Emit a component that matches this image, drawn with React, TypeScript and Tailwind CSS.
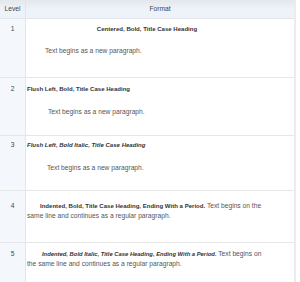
import React from 'react';

type Row = {
  level: string;
  height: string;
  pad: string;
  content: React.ReactNode;
};

// bold headings in the source render narrower than the body copy
const head = 'font-bold text-[6.05px] text-[#333]';

const rows: Row[] = [
  {
    level: '1',
    height: 'h-[59px]',
    pad: 'pt-[5px]',
    content: (
      <>
        <p className={`text-center ${head}`}>Centered, Bold, Title Case Heading</p>
        <p className="mt-[12px] pl-[18px] text-[#555]">Text begins as a new paragraph.</p>
      </>
    ),
  },
  {
    level: '2',
    height: 'h-[58px]',
    pad: 'pt-[6px]',
    content: (
      <>
        <p className={head}>Flush Left, Bold, Title Case Heading</p>
        <p className="mt-[13px] pl-[21px] text-[#555]">Text begins as a new paragraph.</p>
      </>
    ),
  },
  {
    level: '3',
    height: 'h-[55px]',
    pad: 'pt-[4px]',
    content: (
      <>
        <p className={`italic ${head}`}>Flush Left, Bold Italic, Title Case Heading</p>
        <p className="mt-[13px] pl-[20px] text-[#555]">Text begins as a new paragraph.</p>
      </>
    ),
  },
  {
    level: '4',
    height: 'h-[52px]',
    pad: 'pt-[10px]',
    content: (
      <p className="indent-[13px] text-[#555]">
        <span className={head}>Indented, Bold, Title Case Heading, Ending With a Period.</span>{' '}
        Text begins on the same line and continues as a regular paragraph.
      </p>
    ),
  },
  {
    level: '5',
    height: 'h-[52px]',
    pad: 'pt-[6px]',
    content: (
      <p className="indent-[15px] text-[#555]">
        <span className="font-bold text-[5.85px] text-[#333] italic">
          Indented, Bold Italic, Title Case Heading, Ending With a Period.
        </span>{' '}
        Text begins on the same line and continues as a regular paragraph.
      </p>
    ),
  },
];

export default function App() {
  return (
    <div className="h-[282px] w-[300px] overflow-hidden bg-white font-['Liberation_Sans',Arial,sans-serif] text-[6.7px] leading-[10px]">
      <div className="w-[296px] border-r-2 border-[#ececec]">
        {/* header */}
        <div className="grid h-[19px] grid-cols-[26px_1fr] border-b border-[#e2e6ec] bg-gradient-to-b from-[#e4e7eb] via-[#eef3fa] to-[#eef3fa] text-[#444]">
          <div className="flex items-center justify-center border-r border-[#e2e6ec]">Level</div>
          <div className="flex items-center justify-center">Format</div>
        </div>

        {rows.map((row) => (
          <div key={row.level} className={`grid grid-cols-[26px_1fr] border-b border-[#e6e6e6] ${row.height}`}>
            <div className={`border-r border-[#e2e6ec] bg-[#f4f7fc] text-center text-[#444] ${row.pad}`}>
              {row.level}
            </div>
            <div className={`pl-[1px] pr-[27px] ${row.pad}`}>{row.content}</div>
          </div>
        ))}
      </div>
    </div>
  );
}
